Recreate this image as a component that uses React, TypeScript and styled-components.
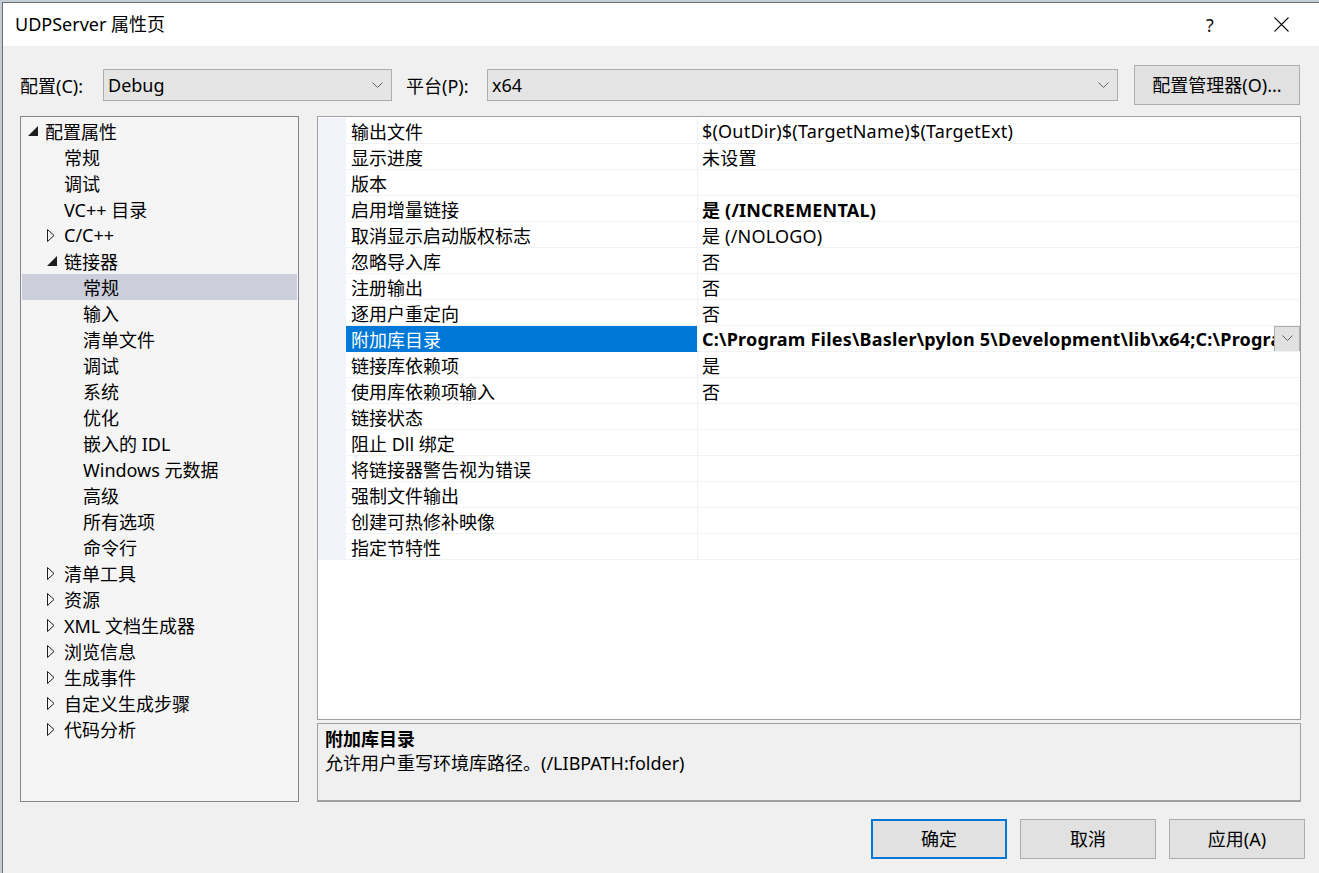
import React from "react";
import styled, { createGlobalStyle } from "styled-components";

const FONT = `"Noto Sans", "Noto Sans CJK SC", sans-serif`;

const Global = createGlobalStyle`
  html, body { margin: 0; padding: 0; }
  body {
    background: #c4ccd6;
    font-family: ${FONT};
    font-size: 18px;
    color: #000;
    overflow: hidden;
  }
  #root { height: 873px; }
`;

const Frame = styled.div`
  height: 873px;
  padding: 2px 2px 0 2px;
  box-sizing: border-box;
  display: flex;
`;

const Dialog = styled.div`
  flex: 1;
  display: flex;
  flex-direction: column;
  border: 1px solid #6f6f6f;
  border-bottom: none;
  background: #f0f0f0;
`;

const TitleBar = styled.div`
  height: 43px;
  background: #fff;
  display: flex;
  align-items: center;
  padding-left: 12px;
  flex: none;
`;

const Title = styled.div`
  flex: 1;
  font-size: 18px;
  line-height: 24px;
  padding-bottom: 2px;
`;

const TitleButton = styled.div<{ $w: number }>`
  width: ${(p) => p.$w}px;
  height: 43px;
  display: flex;
  align-items: center;
  justify-content: center;
  font-size: 18px;
  color: #111;
  flex: none;
`;

const Body = styled.div`
  flex: 1;
  display: flex;
  flex-direction: column;
  padding: 19px 15px 14px 17px;
`;

const ConfigRow = styled.div`
  display: flex;
  align-items: center;
  height: 40px;
  padding-right: 5px;
`;

const Label = styled.div<{ $w: number }>`
  width: ${(p) => p.$w}px;
  font-size: 18px;
  flex: none;
`;

const Combo = styled.div<{ $w: number }>`
  width: ${(p) => p.$w}px;
  height: 32px;
  box-sizing: border-box;
  border: 1px solid #adadad;
  background: #e5e5e5;
  display: flex;
  align-items: center;
  padding: 0 8px 0 4px;
  font-size: 18px;
  flex: none;
`;

const ComboText = styled.div`
  flex: 1;
`;

const Spacer = styled.div<{ $w: number }>`
  width: ${(p) => p.$w}px;
  flex: none;
`;

const Button = styled.div<{ $w: number; $h: number; $default?: boolean }>`
  width: ${(p) => p.$w}px;
  height: ${(p) => p.$h}px;
  box-sizing: border-box;
  border: ${(p) => (p.$default ? "2px solid #0078d7" : "1px solid #adadad")};
  background: #e1e1e1;
  display: flex;
  align-items: center;
  justify-content: center;
  font-size: 18px;
  flex: none;
  padding-bottom: 2px;
`;

const Main = styled.div`
  display: flex;
  margin-top: 11px;
  height: 686px;
  padding-right: 4px;
`;

const Tree = styled.div`
  width: 279px;
  box-sizing: border-box;
  border: 1px solid #828790;
  background: #f5f5f5;
  padding: 1px;
  flex: none;
`;

const TreeRow = styled.div<{ $level: number; $selected?: boolean }>`
  height: 26px;
  display: flex;
  align-items: center;
  padding-left: ${(p) => 6 + p.$level * 19}px;
  background: ${(p) => (p.$selected ? "#cccedb" : "transparent")};
  font-size: 18px;
  white-space: nowrap;
`;

const Arrow = styled.div`
  width: 17px;
  height: 26px;
  display: flex;
  align-items: center;
  flex: none;
`;

const RightCol = styled.div`
  margin-left: 18px;
  flex: 1;
  display: flex;
  flex-direction: column;
  gap: 3px;
`;

const Grid = styled.div`
  height: 604px;
  box-sizing: border-box;
  border: 1px solid #a0a0a0;
  background: #fff;
  padding-top: 1px;
`;

const PropRow = styled.div`
  display: grid;
  grid-template-columns: 28px 352px 1fr;
  height: 26px;
`;

const Margin = styled.div`
  background: #f1f5fb;
`;

const NameCell = styled.div<{ $selected?: boolean }>`
  background: ${(p) => (p.$selected ? "#0078d7" : "#fff")};
  color: ${(p) => (p.$selected ? "#fff" : "#000")};
  border-bottom: 1px solid ${(p) => (p.$selected ? "#0078d7" : "#f0f2f6")};
  border-right: 1px solid #f0f2f6;
  padding-left: 5px;
  display: flex;
  align-items: center;
  font-size: 18px;
  white-space: nowrap;
  overflow: hidden;
`;

const ValueCell = styled.div<{ $bold?: boolean }>`
  border-bottom: 1px solid #f0f2f6;
  padding-left: 4px;
  display: flex;
  align-items: center;
  font-size: 18px;
  letter-spacing: 0.2px;
  font-weight: ${(p) => (p.$bold ? 700 : 400)};
  white-space: nowrap;
  overflow: hidden;
  min-width: 0;
`;

const ValueText = styled.div`
  flex: 1;
  overflow: hidden;
  white-space: nowrap;
  min-width: 0;
`;

const DropButton = styled.div`
  width: 26px;
  height: 26px;
  box-sizing: border-box;
  border: 1px solid #adadad;
  background: #e1e1e1;
  display: flex;
  align-items: center;
  justify-content: center;
  flex: none;
`;

const Desc = styled.div`
  flex: 1;
  box-sizing: border-box;
  border: 1px solid #a0a0a0;
  border-bottom: 2px solid #a0a0a0;
  padding: 3px 7px;
  background: #f0f0f0;
`;

const DescTitle = styled.div`
  font-weight: 700;
  font-size: 18px;
  line-height: 24px;
`;

const DescText = styled.div`
  font-size: 18px;
  line-height: 24px;
`;

const Footer = styled.div`
  display: flex;
  justify-content: flex-end;
  gap: 13px;
  margin-top: 17px;
`;

const Chevron = ({ color = "#606060" }: { color?: string }) => (
  <svg width="11" height="7" viewBox="0 0 11 7">
    <polyline points="0.5,0.5 5.5,5.5 10.5,0.5" fill="none" stroke={color} strokeWidth="1" />
  </svg>
);

const Expanded = () => (
  <svg width="10" height="10" viewBox="0 0 10 10">
    <polygon points="10,0 10,10 0,10" fill="#1e1e1e" />
  </svg>
);

const Collapsed = () => (
  <svg width="8" height="13" viewBox="0 0 8 13">
    <polygon points="0.5,0.5 7,6.5 0.5,12.5" fill="none" stroke="#1e1e1e" strokeWidth="1" />
  </svg>
);

type TreeItem = { label: string; level: number; state?: "open" | "closed"; selected?: boolean };

const treeItems: TreeItem[] = [
  { label: "配置属性", level: 0, state: "open" },
  { label: "常规", level: 1 },
  { label: "调试", level: 1 },
  { label: "VC++ 目录", level: 1 },
  { label: "C/C++", level: 1, state: "closed" },
  { label: "链接器", level: 1, state: "open" },
  { label: "常规", level: 2, selected: true },
  { label: "输入", level: 2 },
  { label: "清单文件", level: 2 },
  { label: "调试", level: 2 },
  { label: "系统", level: 2 },
  { label: "优化", level: 2 },
  { label: "嵌入的 IDL", level: 2 },
  { label: "Windows 元数据", level: 2 },
  { label: "高级", level: 2 },
  { label: "所有选项", level: 2 },
  { label: "命令行", level: 2 },
  { label: "清单工具", level: 1, state: "closed" },
  { label: "资源", level: 1, state: "closed" },
  { label: "XML 文档生成器", level: 1, state: "closed" },
  { label: "浏览信息", level: 1, state: "closed" },
  { label: "生成事件", level: 1, state: "closed" },
  { label: "自定义生成步骤", level: 1, state: "closed" },
  { label: "代码分析", level: 1, state: "closed" },
];

type Prop = { name: string; value: string; bold?: boolean; selected?: boolean };

const props: Prop[] = [
  { name: "输出文件", value: "$(OutDir)$(TargetName)$(TargetExt)" },
  { name: "显示进度", value: "未设置" },
  { name: "版本", value: "" },
  { name: "启用增量链接", value: "是 (/INCREMENTAL)", bold: true },
  { name: "取消显示启动版权标志", value: "是 (/NOLOGO)" },
  { name: "忽略导入库", value: "否" },
  { name: "注册输出", value: "否" },
  { name: "逐用户重定向", value: "否" },
  {
    name: "附加库目录",
    value: "C:\\Program Files\\Basler\\pylon 5\\Development\\lib\\x64;C:\\Program Files\\Basler\\pylon 5\\Development\\lib\\Win32",
    bold: true,
    selected: true,
  },
  { name: "链接库依赖项", value: "是" },
  { name: "使用库依赖项输入", value: "否" },
  { name: "链接状态", value: "" },
  { name: "阻止 Dll 绑定", value: "" },
  { name: "将链接器警告视为错误", value: "" },
  { name: "强制文件输出", value: "" },
  { name: "创建可热修补映像", value: "" },
  { name: "指定节特性", value: "" },
];

export default function App() {
  return (
    <>
      <Global />
      <Frame>
        <Dialog>
          <TitleBar>
            <Title>UDPServer 属性页</Title>
            <TitleButton $w={64}>?</TitleButton>
            <TitleButton $w={78}>
              <svg width="15" height="15" viewBox="0 0 15 15">
                <path d="M0.5 0.5 L14.5 14.5 M14.5 0.5 L0.5 14.5" stroke="#111" strokeWidth="1.1" />
              </svg>
            </TitleButton>
          </TitleBar>
          <Body>
            <ConfigRow>
              <Label $w={83}>配置(C):</Label>
              <Combo $w={289}>
                <ComboText>Debug</ComboText>
                <Chevron />
              </Combo>
              <Spacer $w={14} />
              <Label $w={81}>平台(P):</Label>
              <Combo $w={631}>
                <ComboText>x64</ComboText>
                <Chevron />
              </Combo>
              <Spacer $w={16} />
              <Button $w={166} $h={40}>配置管理器(O)...</Button>
            </ConfigRow>
            <Main>
              <Tree>
                {treeItems.map((t, i) => (
                  <TreeRow key={i} $level={t.level} $selected={t.selected}>
                    <Arrow>
                      {t.state === "open" && <Expanded />}
                      {t.state === "closed" && <Collapsed />}
                    </Arrow>
                    {t.label}
                  </TreeRow>
                ))}
              </Tree>
              <RightCol>
                <Grid>
                  {props.map((p, i) => (
                    <PropRow key={i}>
                      <Margin />
                      <NameCell $selected={p.selected}>{p.name}</NameCell>
                      <ValueCell $bold={p.bold}>
                        <ValueText>{p.value}</ValueText>
                        {p.selected && (
                          <DropButton>
                            <Chevron />
                          </DropButton>
                        )}
                      </ValueCell>
                    </PropRow>
                  ))}
                </Grid>
                <Desc>
                  <DescTitle>附加库目录</DescTitle>
                  <DescText>允许用户重写环境库路径。(/LIBPATH:folder)</DescText>
                </Desc>
              </RightCol>
            </Main>
            <Footer>
              <Button $w={136} $h={40} $default>确定</Button>
              <Button $w={136} $h={40}>取消</Button>
              <Button $w={136} $h={40}>应用(A)</Button>
            </Footer>
          </Body>
        </Dialog>
      </Frame>
    </>
  );
}
